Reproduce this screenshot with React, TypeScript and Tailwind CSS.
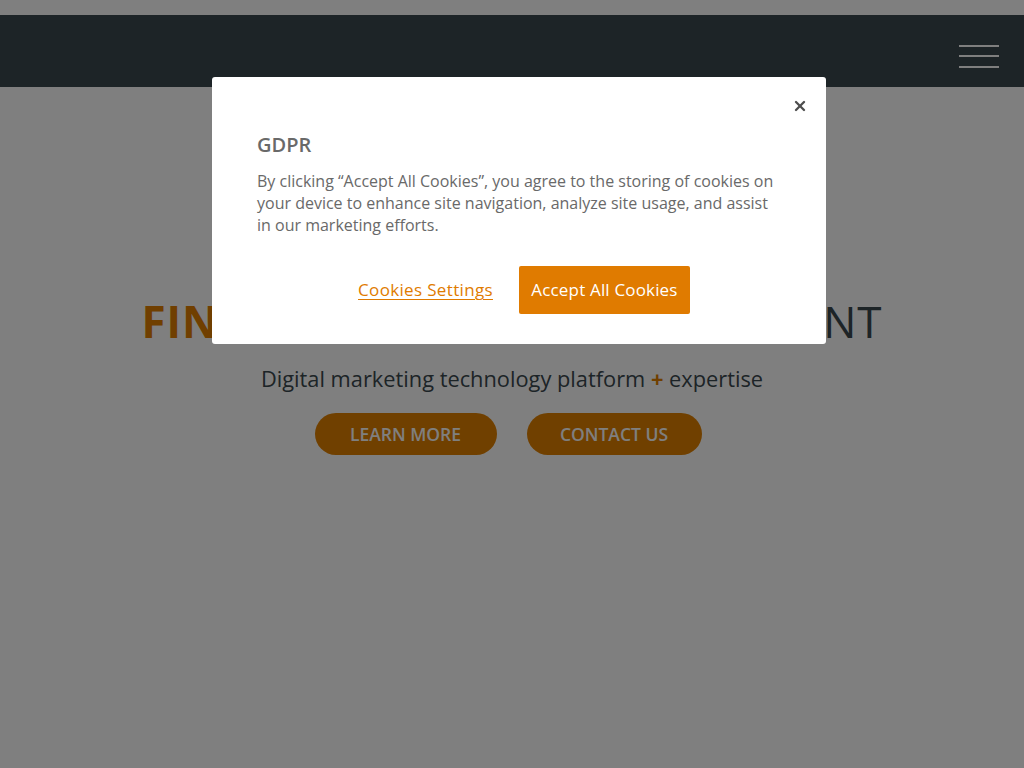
import { X } from "lucide-react";

const Hamburger = () => (
  <button className="flex flex-col gap-[8.5px] w-10 mr-[25px] mt-[10px]" aria-label="Menu">
    <span className="block h-[2px] w-10 bg-white" />
    <span className="block h-[2px] w-10 bg-white" />
    <span className="block h-[2px] w-10 bg-white" />
  </button>
);

const CookieModal = () => (
  <div className="fixed inset-0 bg-black/50">
    <div className="absolute left-[212px] top-[77px] w-[614px] h-[267px] bg-white rounded-[3px] font-['Open_Sans',sans-serif]">
      <button className="absolute right-[18px] top-[21px] text-[#4d4d4d]" aria-label="Close">
        <X size={16} strokeWidth={3.5} />
      </button>
      <div className="px-[45px] pt-[52px]">
        <h2 className="text-[20px] leading-[32px] font-semibold text-[#696969]">GDPR</h2>
        <p className="mt-[9px] text-[16px] leading-[22px] text-[#696969] pr-[4px]">
          By clicking “Accept All Cookies”, you agree to the storing of cookies on your device to
          enhance site navigation, analyze site usage, and assist in our marketing efforts.
        </p>
        <div className="mt-[30px] flex items-center justify-center gap-[26px] pl-[10px]">
          <a className="text-[17px] tracking-[0.02em] text-[#e07b00] underline underline-offset-[3px] cursor-pointer">
            Cookies Settings
          </a>
          <button className="h-[48px] w-[171px] rounded-[2px] bg-[#e07b00] text-white text-[17px] tracking-[0.01em]">
            Accept All Cookies
          </button>
        </div>
      </div>
    </div>
  </div>
);

export default function App() {
  return (
    <div className="min-h-[768px] bg-white font-['Open_Sans',sans-serif]">
      <div className="h-[15px] bg-white" />
      <header className="h-[72px] bg-[#3a484e] flex items-center justify-end">
        <Hamburger />
      </header>
      <section className="pt-[208px] flex flex-col items-center text-center">
        <h1 className="text-[44px] leading-[53px] text-[#3a484e] tracking-[0.022em]">
          <span className="font-bold text-[#e07f00]">FINANCIAL</span> BRAND MANAGEMENT
        </h1>
        <p className="mt-[17px] text-[21.8px] leading-[28px] text-[#3a484e]">
          Digital marketing technology platform <span className="font-bold text-[#e07f00]">+</span> expertise
        </p>
        <div className="mt-[20px] mr-[8px] flex gap-[30px]">
          <button className="h-[42px] w-[182px] rounded-full bg-[#e08000] text-white text-[17.5px] font-semibold">
            LEARN MORE
          </button>
          <button className="h-[42px] w-[175px] rounded-full bg-[#e08000] text-white text-[17.5px] font-semibold">
            CONTACT US
          </button>
        </div>
      </section>
      <CookieModal />
    </div>
  );
}
